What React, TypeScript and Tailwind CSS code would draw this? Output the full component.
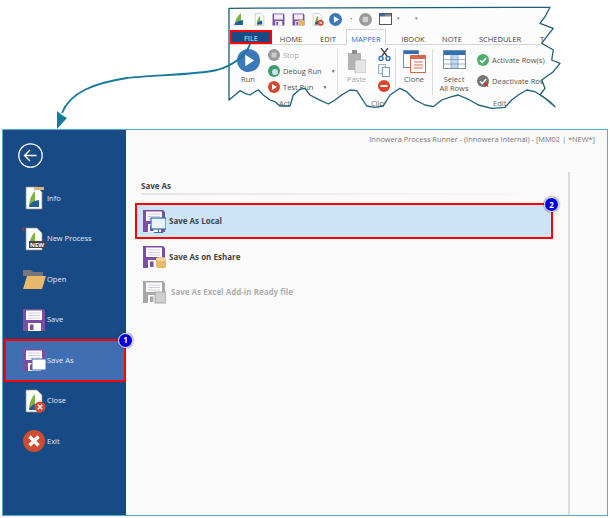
import type { ReactNode } from "react";

const tabs = [
  { label: "HOME", w: "w-[38px]" },
  { label: "EDIT", w: "w-[36px]" },
  { label: "MAPPER", w: "w-[40px]", active: true },
  { label: "IBOOK", w: "w-[54px]" },
  { label: "NOTE", w: "w-[24px]" },
  { label: "SCHEDULER", w: "w-[72px]" },
  { label: "T", w: "w-[12px]" },
];

function Floppy({ size = 24, color = "#7b4fa3", overlay }: { size?: number; color?: string; overlay?: ReactNode }) {
  return (
    <svg width={size} height={size} viewBox="0 0 24 24" className="shrink-0">
      <path d="M1 1h20l2 2v20H1z" fill={color} />
      <rect x="4" y="2.5" width="16" height="9.5" fill="#fff" />
      <path d="M6 5h12M6 7.5h12M6 10h12" stroke="#c9bcd8" strokeWidth="0.8" />
      <rect x="6" y="15" width="13" height="8" fill="#fff" />
      <rect x="8" y="16.5" width="3.5" height="5.5" fill={color} />
      {overlay}
    </svg>
  );
}

function DocLogo({ size = 24, badge, corner }: { size?: number; badge?: ReactNode; corner?: ReactNode }) {
  return (
    <svg width={size} height={size} viewBox="0 0 24 24" className="shrink-0">
      <path d="M4 1h11l5 5v17H4z" fill="#fff" stroke="#8a8a8a" strokeWidth="0.7" />
      <path d="M7 21c0-6 2-12 6-16v16z" fill="#7cb342" />
      <path d="M7 21c1-4 4-6 10-7v7z" fill="#1f5f9e" />
      {corner}
      {badge}
    </svg>
  );
}

function Dot({ color, size = 12, children }: { color: string; size?: number; children?: ReactNode }) {
  return (
    <svg width={size} height={size} viewBox="0 0 12 12" className="shrink-0">
      <circle cx="6" cy="6" r="6" fill={color} />
      {children}
    </svg>
  );
}

const check = <path d="M3 6.2l2.2 2.2L9.2 4" fill="none" stroke="#fff" strokeWidth="1.6" />;

function SmallX() {
  return (
    <g>
      <circle cx="18" cy="18" r="5.5" fill="#cf4b32" />
      <path d="M15.8 15.8l4.4 4.4M20.2 15.8l-4.4 4.4" stroke="#fff" strokeWidth="1.6" />
    </g>
  );
}

function Caret() {
  return <span className="ml-[6px] text-[5px] text-[#666]">▼</span>;
}

function DocLogoBare() {
  return (
    <svg width="13" height="14" viewBox="0 0 13 14">
      <path d="M2 13c0-5 2-9 6-12v12z" fill="#7cb342" />
      <path d="M1 13c1-3 4-4 9-5v5z" fill="#1f5f9e" />
    </svg>
  );
}

function QuickBar() {
  return (
    <div className="flex h-[22px] items-center pl-[4px]">
      <div className="w-[20px]"><DocLogoBare /></div>
      <div className="w-[19px]"><DocLogo size={13} /></div>
      <div className="w-[20px]"><Floppy size={13} /></div>
      <div className="w-[19px]">
        <Floppy size={13} overlay={<rect x="12" y="13" width="11" height="10" fill="#e5b566" />} />
      </div>
      <div className="w-[18px]"><DocLogo size={13} badge={<SmallX />} /></div>
      <div className="w-[16px]">
        <Dot color="#3d78b8" size={13}><path d="M4.5 3l5 3-5 3z" fill="#fff" /></Dot>
      </div>
      <div className="w-[14px] pl-[5px] text-[6px] leading-none text-[#777]">•</div>
      <div className="w-[20px]">
        <Dot color="#9a9a9a" size={13}><rect x="3.5" y="3.5" width="5" height="5" fill="#d0d0d0" /></Dot>
      </div>
      <svg width="13" height="12" viewBox="0 0 13 12" className="shrink-0">
        <rect x="0.5" y="0.5" width="12" height="11" fill="#fff" stroke="#555" />
        <rect x="1" y="1" width="5" height="2.5" fill="#2f6fb5" />
        <rect x="6" y="1" width="6" height="2.5" fill="#888" />
      </svg>
      <span className="ml-[5px] w-[18px] text-[5px] text-[#777]">▾</span>
      <span className="text-[5px] text-[#777]">▾</span>
    </div>
  );
}

function Tabs() {
  return (
    <div className="flex h-[15px] items-stretch border-b border-[#d6d6d6] pl-[1px] text-[7.5px] leading-[12px] text-[#444]">
      <div className="flex w-[42px] items-center justify-center border-2 border-[#f00] bg-[#184a86] pt-[1px] text-[#dfe7f2]">
        FILE
      </div>
      {tabs.map((tab) => (
        <div
          key={tab.label}
          className={
            tab.active
              ? "z-10 -mt-[1px] -mb-[1px] flex w-[40px] items-center justify-center border border-b-0 border-[#d6d6d6] bg-[#fcfcfc] pt-[3px] text-[#2f6fb5]"
              : `flex ${tab.w} items-center justify-center pt-[3px]`
          }
        >
          {tab.label}
        </div>
      ))}
    </div>
  );
}

function SmallAction({ icon, label, muted, caret }: { icon: ReactNode; label: string; muted?: boolean; caret?: boolean }) {
  return (
    <div className={`flex h-[16px] items-center gap-[3px] ${muted ? "text-[#a8a8a8]" : "text-[#555]"}`}>
      {icon}
      <span className="whitespace-nowrap">{label}</span>
      {caret && <Caret />}
    </div>
  );
}

function Separator() {
  return <div className="my-[4px] w-[1px] shrink-0 bg-[#dedede]" />;
}

function RibbonBody() {
  return (
    <div className="flex h-[54px] bg-[#fcfcfc] text-[7.5px] leading-[9px] text-[#555]">
      <div className="flex w-[37px] shrink-0 flex-col items-center pt-[4px] pl-[1px]">
        <Dot color="#3d78b8" size={23}><path d="M4.3 3l4.6 3-4.6 3z" fill="#fff" /></Dot>
        <span className="mt-[3px]">Run</span>
      </div>
      <div className="w-[71px] shrink-0 pt-[2px] pl-[2px]">
        <SmallAction icon={<Dot color="#9a9a9a"><rect x="3.5" y="3.5" width="5" height="5" fill="#ccc" /></Dot>} label="Stop" muted />
        <SmallAction icon={<Dot color="#3ca06c"><circle cx="7" cy="7" r="3" fill="#cfe4f7" /></Dot>} label="Debug Run" caret />
        <SmallAction icon={<Dot color="#d2492f"><path d="M4 3l5 3-5 3z" fill="#fff" /></Dot>} label="Test Run" caret />
      </div>
      <Separator />
      <div className="flex w-[35px] shrink-0 flex-col items-center pt-[5px] pl-[2px] text-[#aaa]">
        <svg width="18" height="23" viewBox="0 0 18 23">
          <rect x="0" y="3" width="13" height="17" fill="#b4b4b4" />
          <rect x="4" y="0" width="5" height="4" fill="#8f8f8f" />
          <rect x="7" y="10" width="11" height="13" fill="#e6e6e6" stroke="#a5a5a5" strokeWidth="0.6" />
        </svg>
        <span className="mt-[2px]">Paste</span>
      </div>
      <div className="flex w-[22px] shrink-0 flex-col items-center gap-[3px] pt-[3px]">
        <svg width="13" height="13" viewBox="0 0 13 13">
          <path d="M3 0l6 8M10 0L4 8" stroke="#444" strokeWidth="1.3" />
          <circle cx="3" cy="10.5" r="2" fill="none" stroke="#2f6fb5" strokeWidth="1.4" />
          <circle cx="10" cy="10.5" r="2" fill="none" stroke="#2f6fb5" strokeWidth="1.4" />
        </svg>
        <svg width="12" height="13" viewBox="0 0 12 13">
          <rect x="0.5" y="0.5" width="7" height="9" fill="#eef3f9" stroke="#9db4cc" />
          <rect x="4.5" y="3.5" width="7" height="9" fill="#fff" stroke="#7f9ab8" />
        </svg>
        <Dot color="#d9442c"><rect x="2.5" y="5" width="7" height="2" fill="#fff" /></Dot>
      </div>
      <Separator />
      <div className="flex w-[36px] shrink-0 flex-col items-center pt-[5px]">
        <svg width="23" height="23" viewBox="0 0 23 23">
          <rect x="0.5" y="0.5" width="15" height="17" fill="#fff" stroke="#7b8da3" />
          <rect x="1" y="1" width="14" height="3" fill="#2f6fb5" />
          <rect x="7.5" y="5.5" width="15" height="17" fill="#fff" stroke="#d9664f" />
          <rect x="8" y="6" width="14" height="3" fill="#d9664f" />
          <path d="M11 12h9M11 15h9M11 18h9" stroke="#d9664f" />
        </svg>
        <span className="mt-[2px]">Clone</span>
      </div>
      <Separator />
      <div className="flex w-[42px] shrink-0 flex-col items-center pt-[5px] text-center">
        <svg width="23" height="19" viewBox="0 0 23 19">
          <rect x="0.5" y="0.5" width="22" height="18" fill="#fff" stroke="#7b8da3" />
          <rect x="1" y="1" width="21" height="4" fill="#2f6fb5" />
          <rect x="8" y="5" width="7" height="13" fill="#bcd8f2" />
          <path d="M8 5v13M15 5v13M1 9.5h21M1 14h21" stroke="#7b8da3" strokeWidth="0.7" />
        </svg>
        <span className="mt-[6px]">Select</span>
        <span>All Rows</span>
      </div>
      <div className="shrink-0 pt-[8px] pl-[2px]">
        <div className="flex h-[14px] items-center gap-[3px] whitespace-nowrap">
          <Dot color="#4caf70">{check}</Dot>
          Activate Row(s)
        </div>
        <div className="mt-[7px] flex h-[14px] items-center gap-[3px] whitespace-nowrap">
          <svg width="12" height="12" viewBox="0 0 12 12" className="shrink-0">
            <circle cx="6" cy="6" r="6" fill="#777" />
            <path d="M3 6.2l2.2 2.2L9.2 4" fill="none" stroke="#fff" strokeWidth="1.4" />
            <path d="M7.5 8l3.5 3.5M11 8l-3.5 3.5" stroke="#d9251c" strokeWidth="1.4" />
          </svg>
          Deactivate Row(s)
        </div>
      </div>
    </div>
  );
}

function Ribbon() {
  return (
    <div className="mt-[8px] ml-[229px] h-[100px] w-[330px] overflow-hidden bg-[#fcfcfc]">
      <QuickBar />
      <Tabs />
      <RibbonBody />
      <div className="flex h-[9px] text-[7.5px] leading-[9px] text-[#666]">
        <span className="ml-[50px] w-[92px]">Act</span>
        <span className="w-[122px]">Clipb</span>
        <span>Edit</span>
      </div>
    </div>
  );
}

function Badge({ n, className }: { n: number; className: string }) {
  return (
    <span
      className={`absolute z-10 flex h-[15px] w-[15px] items-center justify-center rounded-full border-[1.5px] border-white bg-[#0000dd] text-[8px] font-bold text-white shadow-[0_0_2px_#333] ${className}`}
    >
      {n}
    </span>
  );
}

const menu: { label: string; icon: ReactNode; selected?: boolean }[] = [
  {
    label: "Info",
    icon: <DocLogo corner={<rect x="12" y="1" width="10" height="3" fill="#d8b27a" />} />,
  },
  {
    label: "New Process",
    icon: (
      <DocLogo
        corner={
          <>
            <path d="M0 1h3M0 3h3" stroke="#c0392b" strokeWidth="1" />
            <rect x="7" y="14" width="17" height="7" fill="#444" />
            <text x="8" y="20" fontSize="6" fontWeight="700" fill="#fff">NEW</text>
          </>
        }
      />
    ),
  },
  {
    label: "Open",
    icon: (
      <svg width="24" height="24" viewBox="0 0 24 24" className="shrink-0">
        <path d="M1 3h8l2 2h10v4H1v13z" fill="#777" />
        <path d="M1 22l4-13h19l-4 13z" fill="#e8b86d" />
      </svg>
    ),
  },
  { label: "Save", icon: <Floppy /> },
  {
    label: "Save As",
    selected: true,
    icon: <Floppy overlay={<rect x="10" y="11" width="14" height="11" fill="#fff" stroke="#3f6eb3" strokeWidth="1" />} />,
  },
  { label: "Close", icon: <DocLogo badge={<SmallX />} /> },
  {
    label: "Exit",
    icon: (
      <svg width="24" height="24" viewBox="0 0 24 24" className="shrink-0">
        <circle cx="12" cy="12" r="11" fill="#cf4b32" />
        <path d="M7.5 7.5l9 9M16.5 7.5l-9 9" stroke="#fff" strokeWidth="3.4" />
      </svg>
    ),
  },
];

function Sidebar() {
  return (
    <aside className="w-[123px] shrink-0 bg-[#184a86] text-[7.5px] text-[#e6ecf5]">
      <div className="pt-[13px] pl-[15px]">
        <svg width="25" height="25" viewBox="0 0 25 25">
          <circle cx="12.5" cy="12.5" r="11.7" fill="none" stroke="#fff" strokeWidth="1.3" />
          <path d="M6.5 12.5h12M12 7l-5.5 5.5L12 18" fill="none" stroke="#fff" strokeWidth="1.3" />
        </svg>
      </div>
      <div className="mt-[10px]">
        {menu.map((item) =>
          item.selected ? (
            <div
              key={item.label}
              className="relative z-[1] -my-[1.5px] ml-[1px] flex h-[43.5px] items-center gap-[1px] border-2 border-[#f00] bg-[#3f6eb3] pl-[16px]"
            >
              {item.icon}
              {item.label}
              <Badge n={1} className="-top-[8px] -right-[9px]" />
            </div>
          ) : (
            <div key={item.label} className="flex h-[40.5px] items-center gap-[1px] pl-[19px]">
              {item.icon}
              {item.label}
            </div>
          )
        )}
      </div>
    </aside>
  );
}

function Content() {
  return (
    <main className="flex min-w-0 flex-1 flex-col bg-[#fafafa]">
      <div className="h-[42px] pt-[4px] pr-[12px] text-right text-[7.4px] text-[#777]">
        Innowera Process Runner - (Innowera Internal) - [MM02 | *NEW*]
      </div>
      <div className="w-[444px] flex-1 border-r-2 border-[#dcdcdc] pl-[9px] text-[8px] leading-[12px] font-bold text-[#444]">
        <div className="mt-[8px] ml-[6px] h-[13px]">Save As</div>
        <div className="ml-[6px] h-[2px] w-[405px] bg-gradient-to-r from-[#e4e4e4] to-[#fafafa]" />
        <div className="relative mt-[8px] flex h-[36px] w-[418px] items-center gap-[3px] border-2 border-[#f00] bg-[#cce4f7] pl-[5px]">
          <Floppy
            overlay={
              <>
                <rect x="9" y="9" width="15" height="11" fill="#eaf3fb" stroke="#2f6fb5" strokeWidth="1.2" />
                <path d="M16.5 20v3M12 23.5h9" stroke="#2f6fb5" strokeWidth="1.2" />
              </>
            }
          />
          Save As Local
          <Badge n={2} className="-top-[8px] -right-[8px]" />
        </div>
        <div className="flex h-[35px] items-center gap-[3px] pl-[7px]">
          <Floppy
            overlay={
              <>
                <rect x="14" y="13" width="10" height="10" rx="2" fill="#e8b86d" />
                <ellipse cx="19" cy="14" rx="5" ry="2" fill="#f3d49d" />
              </>
            }
          />
          Save As on Eshare
        </div>
        <div className="flex h-[35px] items-center gap-[5px] pl-[7px] text-[#b0b0b0]">
          <Floppy
            color="#a8a8a8"
            overlay={<rect x="13" y="12" width="11" height="11" fill="#cfcfcf" stroke="#999" strokeWidth="0.8" />}
          />
          Save As Excel Add-in Ready file
        </div>
      </div>
    </main>
  );
}

// traced along the torn crop, in thirds of a pixel from (225, 0)
const tornPoints = [
  [12, 25], [975, 22], [960, 50], [945, 70], [985, 85], [965, 110], [950, 130], [985, 150], [980, 180],
  [1005, 190], [985, 215], [950, 240], [960, 265], [945, 285], [960, 295], [990, 320], [975, 305], [955, 290],
  [930, 275], [905, 270], [880, 285], [860, 300], [840, 322], [800, 325], [760, 315], [730, 298], [700, 285],
  [680, 290], [650, 300], [625, 320], [600, 315], [570, 300], [545, 275], [525, 265], [495, 285], [475, 318],
  [450, 322], [425, 318], [395, 272], [375, 270], [350, 285], [330, 300], [310, 312], [280, 298], [255, 285],
  [240, 265], [225, 268], [205, 285], [195, 318], [165, 318], [150, 305], [135, 300], [115, 285], [100, 270],
  [90, 275], [75, 285], [60, 280], [45, 272], [30, 285], [12, 300],
];
const tornEdge = "M" + tornPoints.map(([x, y]) => `${(x / 3 + 225).toFixed(1)} ${(y / 3).toFixed(1)}`).join("L") + "Z";

export default function App() {
  return (
    <div className="relative h-[518px] w-[610px] overflow-hidden bg-white font-['Open_Sans','Liberation_Sans',sans-serif]">
      <Ribbon />
      {/* torn edge of the ribbon crop */}
      <svg className="absolute top-0 left-0 z-20" width="610" height="128" viewBox="0 0 610 128">
        <path d={`M224 2H606V127H224Z${tornEdge}`} fill="#fff" fillRule="evenodd" />
        <path d={tornEdge} fill="none" stroke="#1d5f76" strokeWidth="1.3" strokeLinejoin="round" />
      </svg>
      {/* callout arrow */}
      <svg className="absolute top-0 left-0 z-30" width="610" height="132" viewBox="0 0 610 132">
        <path d="M250 44C246 56 232 66 217 70C195 75 150 75 127 78C95 83 70 92 62 113" fill="none" stroke="#17799c" strokeWidth="1.8" />
        <path d="M57 129L57 111L62 115L67 118z" fill="#17799c" />
      </svg>
      <div className="mt-[21px] ml-[2px] flex h-[387px] w-[606px] border border-[#5aa9c6]">
        <Sidebar />
        <Content />
      </div>
    </div>
  );
}
